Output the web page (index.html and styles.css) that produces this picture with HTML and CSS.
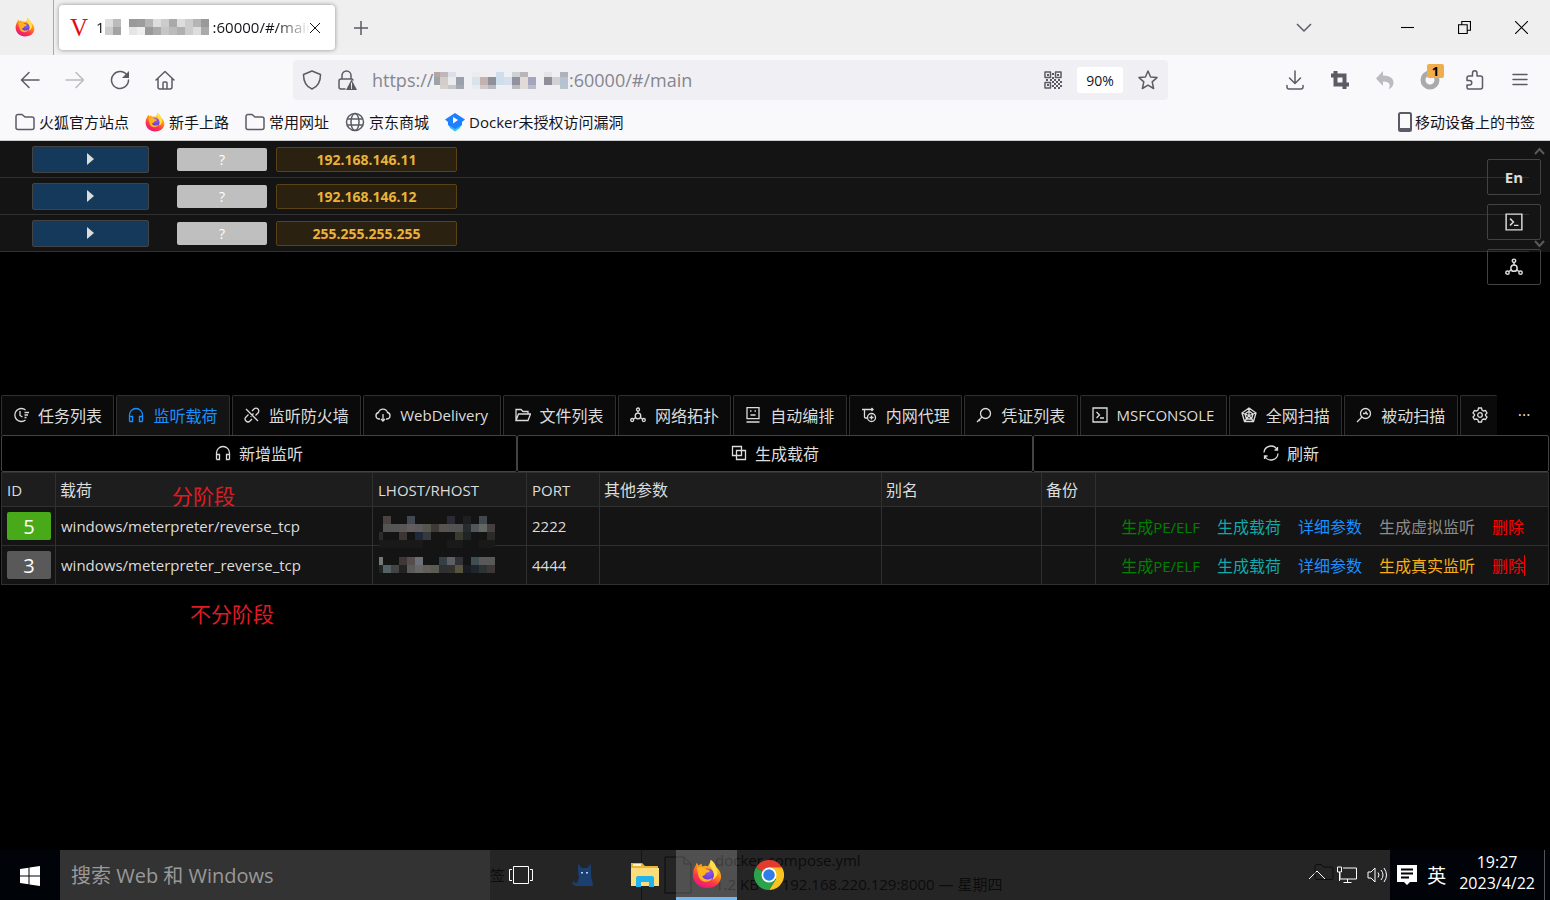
FILE: index.html
```html
<!DOCTYPE html>
<html lang="zh-CN">

<head>
  <meta charset="UTF-8">
  <meta name="viewport" content="width=device-width, initial-scale=1.0">
  <title>main</title>
  <link rel="stylesheet" href="styles.css">
</head>

<body>
  <!-- Shared icons -->
  <svg class="defs" width="0" height="0" aria-hidden="true">
    <defs>
      <linearGradient id="fox" x1="0.8" y1="0" x2="0.3" y2="1">
        <stop offset="0" stop-color="#fff44f" />
        <stop offset="0.4" stop-color="#ff980e" />
        <stop offset="0.7" stop-color="#ff3647" />
        <stop offset="1" stop-color="#e31587" />
      </linearGradient>
      <radialGradient id="globe" cx="0.6" cy="0.3" r="0.8">
        <stop offset="0" stop-color="#9059ff" />
        <stop offset="1" stop-color="#5b2bb5" />
      </radialGradient>
    </defs>
    <symbol id="i-firefox" viewBox="0 0 32 32">
      <path fill="url(#fox)" d="M20 1c4 3 5 6 6 8 4 3 5 7 5 10 0 7-7 12-15 12S1 25 1 17c0-4 1-7 3-10l1-3c1 1 1 2 2 3l3-2 1 3c2-1 4-1 6 0 1-3 3-4 3-7z" />
      <circle cx="16.500" cy="17" r="7" fill="url(#globe)" />
      <path fill="#ffb41f" d="M5 9c3-1 7-1 10 2 2 0 4 1 4 2-1 1-3 1-4 2s-1 3-4 3c1 4 7 5 11 2-2 6-13 6-15-2-1-3-1-6-2-9z" />
      <path fill="#ffe14a" d="M20 1c-1 4-1 6 1 9s4 7 1 12c6-3 6-9 4-13-1-2-2-5-6-8z" />
    </symbol>
    <symbol id="i-folder" viewBox="0 0 20 20">
      <path d="M1 4.500a2 2 0 0 1 2-2h4l3 2.500h7a2 2 0 0 1 2 2v8.500a2 2 0 0 1-2 2H3a2 2 0 0 1-2-2z" />
    </symbol>
    <symbol id="i-headset" viewBox="0 0 16 16">
      <path d="M1.500 14.500V8a6.500 6.500 0 0 1 13 0v6.500M1.500 9.500h3v5h-3M14.500 9.500h-3v5h3" />
    </symbol>
    <symbol id="i-topology" viewBox="0 0 16 16">
      <circle cx="8" cy="2.500" r="1.500" /><circle cx="8" cy="9" r="2.800" /><circle cx="2.200" cy="13" r="1.500" /><circle cx="13.800" cy="13" r="1.500" />
      <path d="M8 4v2.200M5.600 10.500l-2 1.500M10.400 10.500l2 1.500" />
    </symbol>
    <symbol id="i-code" viewBox="0 0 16 16">
      <path d="M1 1h14v14H1zM4.500 5l3 3-3 3M8 11h4" />
    </symbol>
  </svg>

  <header class="browser">
    <div class="tabbar">
      <div class="pinned"><svg class="fx"><use href="#i-firefox" /></svg></div>
      <div class="page-tab">
        <span class="favicon">V</span>
        <span class="page-title">1<svg class="mosaic tab-mosaic" viewBox="0 0 108 16" data-cells="ddd,bbb,-,999,9c9c9c,b5b5b5,ddd,ccc,aaa,ddd,ccc,b5b5b5,9a9a9a;ccc,a3a3a3,-,e5e5e5,eee,999,aaa,c5c5c5,bbb,b0b0b0,ccc,ddd,aaa"></svg>:60000/#/main</span>
        <button class="plain" aria-label="关闭标签页"><svg class="x" viewBox="0 0 10 10"><path d="M0 0l10 10M10 0L0 10" /></svg></button>
      </div>
      <button class="plain new-tab" aria-label="新标签页"><svg viewBox="0 0 16 16"><path d="M8 1v14M1 8h14" /></svg></button>
      <div class="window-controls">
        <button class="plain list-tabs" aria-label="列出标签页"><svg viewBox="0 0 16 16"><path d="M1 4l7 7 7-7" /></svg></button>
        <button class="plain" aria-label="最小化"><svg viewBox="0 0 12 12"><path d="M0 6h12" /></svg></button>
        <button class="plain" aria-label="还原"><svg viewBox="0 0 12 12"><path d="M.500 3.500h8v8h-8zM3.500 3V.500h8v8H9" /></svg></button>
        <button class="plain" aria-label="关闭"><svg viewBox="0 0 12 12"><path d="M0 0l12 12M12 0L0 12" /></svg></button>
      </div>
    </div>

    <div class="navbar">
      <button class="plain" aria-label="后退"><svg viewBox="0 0 20 20"><path d="M19 10H2M9 2.500L1.500 10 9 17.500" /></svg></button>
      <button class="plain dim" aria-label="前进"><svg viewBox="0 0 20 20"><path d="M1 10h17M11 2.500l7.500 7.500-7.500 7.500" /></svg></button>
      <button class="plain" aria-label="刷新页面"><svg viewBox="0 0 20 20"><path d="M17.500 6A8.500 8.500 0 1 0 18.500 10" /><path class="solid" d="M19 1v7h-7z" /></svg></button>
      <button class="plain" aria-label="主页"><svg viewBox="0 0 20 20"><path d="M1 10l9-8.500 9 8.500M3 8.500V17a2 2 0 0 0 2 2h10a2 2 0 0 0 2-2V8.500M8 19v-6a1 1 0 0 1 1-1h2a1 1 0 0 1 1 1v6" /></svg></button>
      <div class="urlbar">
        <svg viewBox="0 0 20 20"><path d="M10 1l8.500 3.500c0 6.500-2 12-8.500 14.500C3.500 16.500 1.500 11 1.500 4.500z" /></svg>
        <svg viewBox="0 0 20 20"><path d="M5 9V5.500a4.500 4.500 0 0 1 9 0V9M8 19H4a2 2 0 0 1-2-2v-6a2 2 0 0 1 2-2h11l1 1" /><path class="solid" d="M14.500 9.500L20 20H9z" /><path class="notch" d="M14.500 13v3.500M14.500 17.500v1" /></svg>
        <div class="url-field">
          <input type="text" aria-label="网址" value="https://                             :60000/#/main">
          <svg class="mosaic url-mosaic" viewBox="2 3 134 17" data-cells="b5a7a0,bfb8b8,dcdfe8,-,-,ececee,efefed,-,cfdeec,-,cdd2d3,b9b4b7,-,-,e8e3e4,-,aeb3bb;9ca3a9,d3ccc8,ebebeb,9aa1ac,-,d9e4ea,c3b3b0,8e909c,cfdeec,d6e0ec,92929e,e2dad6,a5a6bb,-,8f8f9c,d1d0d3,b4c3d1;-,d7d1cc,c3c7cd,a4a7ad,-,e6ecf1,d0c9c8,b8b9c1,-,-,b9bdc0,e2dad6,bbbccb,-,-,-,b8c3cc"></svg>
        </div>
        <svg class="qr" viewBox="0 0 18 18"><path d="M1 1h5.500v5.500H1zM11.500 1H17v5.500h-5.500zM1 11.500h5.500V17H1z" /><path class="solid" d="M3 3h2v2H3zM13 3h2v2h-2zM3 13h2v2H3zM8 2h2v2H8zM8 6h2v2H8zM2 8h2v2H2zM6 8h2v2H6zM10 8h2v2h-2zM14 8h2v2h-2zM8 10h2v2H8zM12 10h2v2h-2zM16 10h2v2h-2zM10 12h2v2h-2zM14 12h2v2h-2zM8 14h2v2H8zM12 14h2v2h-2zM16 14h2v2h-2zM10 16h2v2h-2zM14 16h2v2h-2z" /></svg>
        <button class="plain zoom-level">90%</button>
        <svg viewBox="0 0 20 20"><path d="M10 1l2.600 6 6.400.600-4.800 4.300 1.400 6.600L10 15.200l-5.600 3.300 1.400-6.600L1 7.600 7.400 7z" /></svg>
      </div>
      <button class="plain" aria-label="下载"><svg viewBox="0 0 20 20"><path d="M10 1v12M4.500 8l5.500 5.500L15.500 8M2 15.500v1.500a2 2 0 0 0 2 2h12a2 2 0 0 0 2-2v-1.500" /></svg></button>
      <button class="plain" aria-label="截图"><svg viewBox="0 0 20 20"><path class="thick" d="M5.500 1v13.500H19M1 5.500h13.500V19" /></svg></button>
      <button class="plain dim" aria-label="撤销"><svg viewBox="0 0 20 20"><path class="solid" d="M8 1v4.500c7 0 10.500 3 10.500 7 0 3-2 6-5 6.500 2-2.500 2.500-7.500-5.500-7.500V16L1 8.500z" /></svg></button>
      <button class="plain ext" aria-label="扩展"><svg viewBox="0 0 20 20"><circle cx="10" cy="10" r="7" /></svg><span class="count">1</span></button>
      <button class="plain" aria-label="扩展管理"><svg viewBox="0 0 20 20"><path d="M3 19h12.500a2 2 0 0 0 2-2V8a2 2 0 0 0-2-2H12V3a2 2 0 0 0-4.500 0v3H4a2 2 0 0 0-2 2v2.500h2.500a2 2 0 0 1 0 4.500H2v2a2 2 0 0 0 1 2z" /></svg></button>
      <button class="plain" aria-label="菜单"><svg viewBox="0 0 20 20"><path d="M3 4.500h14M3 9.500h14M3 14.500h14" /></svg></button>
    </div>

    <nav class="bookmarks">
      <a href="#"><svg><use href="#i-folder" /></svg>火狐官方站点</a>
      <a href="#"><svg class="fx"><use href="#i-firefox" /></svg>新手上路</a>
      <a href="#"><svg><use href="#i-folder" /></svg>常用网址</a>
      <a href="#"><svg viewBox="0 0 20 20"><circle cx="10" cy="10" r="8.500" /><ellipse cx="10" cy="10" rx="4" ry="8.500" /><path d="M2 7h16M2 13h16" /></svg>京东商城</a>
      <a href="#"><svg class="fx" viewBox="0 0 20 20"><path fill="#35c2f5" d="M3 12l7 4 7-4-2 4-5 3.500L5 16z" /><path fill="#1e80ff" d="M10 1l10 6.500-3 2.500v3l-7 4-7-4v-3L0 7.500z" /><path fill="#fff" d="M8 5l5 3-5 3.500z" /></svg>Docker未授权访问漏洞</a>
      <a href="#" class="mobile"><svg viewBox="0 0 16 20"><rect x="2" y="1" width="12" height="18" rx="1.500" /><path d="M2 17h12" /></svg>移动设备上的书签</a>
    </nav>
  </header>

  <main>
    <section class="hosts">
      <div class="host-list">
        <div class="host">
          <button class="run" aria-label="展开"><svg viewBox="0 0 7 12"><path d="M0 0l7 6-7 6z" /></svg></button>
          <span class="os">?</span>
          <span class="ip">192.168.146.11</span>
        </div>
        <div class="host">
          <button class="run" aria-label="展开"><svg viewBox="0 0 7 12"><path d="M0 0l7 6-7 6z" /></svg></button>
          <span class="os">?</span>
          <span class="ip">192.168.146.12</span>
        </div>
        <div class="host">
          <button class="run" aria-label="展开"><svg viewBox="0 0 7 12"><path d="M0 0l7 6-7 6z" /></svg></button>
          <span class="os">?</span>
          <span class="ip">255.255.255.255</span>
        </div>
        <div class="scroll">
          <svg viewBox="0 0 11 8"><path d="M1 7l4.500-5L10 7" /></svg>
          <svg viewBox="0 0 11 8"><path d="M1 1l4.500 5L10 1" /></svg>
        </div>
      </div>
      <div class="float-buttons">
        <button>En</button>
        <button aria-label="控制台"><svg><use href="#i-code" /></svg></button>
        <button aria-label="网络拓扑"><svg><use href="#i-topology" /></svg></button>
      </div>
    </section>

    <div class="tabs" role="tablist">
      <button role="tab"><svg viewBox="0 0 16 16"><path d="M12.500 3A6.500 6.500 0 1 0 12.500 13M7 4v4.500l2.500 1.500M11.500 5.500H16M11.500 8H15M11.500 10.500h2" /></svg>任务列表</button>
      <button role="tab" class="active" aria-selected="true"><svg><use href="#i-headset" /></svg>监听载荷</button>
      <button role="tab"><svg viewBox="0 0 16 16"><path d="M8 4l2-2a2.800 2.800 0 0 1 4 4l-2.500 2.500M8 12l-2 2a2.800 2.800 0 0 1-4-4l2.500-2.500M2 2l12 12M6.500 9.500l3-3" /></svg>监听防火墙</button>
      <button role="tab"><svg viewBox="0 0 16 16"><path d="M5 12H4a3.300 3.300 0 0 1-.500-6.500 4.700 4.700 0 0 1 9 0A3.300 3.300 0 0 1 12 12h-1M8 7v7M6 12l2 2 2-2" /></svg><span class="latin">WebDelivery</span></button>
      <button role="tab"><svg viewBox="0 0 16 16"><path d="M1 13.500v-11h5l2 2h5V7M1 13.500L3.500 7H15.500l-2.500 6.500z" /></svg>文件列表</button>
      <button role="tab"><svg><use href="#i-topology" /></svg>网络拓扑</button>
      <button role="tab"><svg viewBox="0 0 16 16"><path d="M2 .700h12v11H2zM1.500 15h13M5 4h1.500M9.500 4H11M5.500 8h5" /></svg>自动编排</button>
      <button role="tab"><svg viewBox="0 0 16 16"><path d="M1 2.500h11M10.500 1l1.500 1.500L10.500 4M3.500 3v7a1 1 0 0 0 1 1H6" /><circle cx="10.500" cy="10.500" r="4" /><path d="M8.500 10.500h4M10.500 8.500v4" /></svg>内网代理</button>
      <button role="tab"><svg viewBox="0 0 16 16"><circle cx="9.500" cy="6.500" r="5" /><path d="M6 10l-5 5M2.500 12.500L4 14" /></svg>凭证列表</button>
      <button role="tab"><svg><use href="#i-code" /></svg><span class="latin">MSFCONSOLE</span></button>
      <button role="tab"><svg viewBox="0 0 16 16"><path d="M8 1l7 5-2.500 8.500h-9L1 6zM8 4l4 3-1.500 5h-5L4 7zM8 1v7M15 6L8 8.500M12.500 14.500L8 8.500l-4.500 6M1 6l7 2.500" /></svg>全网扫描</button>
      <button role="tab"><svg viewBox="0 0 16 16"><circle cx="9.500" cy="6.500" r="5" /><path d="M6 10l-5 5M7 6.500h2l1-1.500 1 2h1" /></svg>被动扫描</button>
      <button role="tab" class="cut" aria-label="设置"><svg viewBox="0 0 16 16"><path d="M6.500 1h3l.500 2 1.500 1 2-.500L15 6l-1.500 1.500v1L15 10l-1.500 2.500-2-.500-1.500 1-.500 2h-3L6 13l-1.500-1-2 .500L1 10l1.500-1.500v-1L1 6l1.500-2.500 2 .500L6 3z" /><circle cx="8" cy="8" r="2.300" /></svg></button>
      <button class="more" aria-label="更多">···</button>
    </div>

    <div class="actions">
      <button><svg><use href="#i-headset" /></svg>新增监听</button>
      <button><svg viewBox="0 0 16 16"><path d="M1.500 1.500h9v9h-9zM5.500 5.500h9v9h-9z" /></svg>生成载荷</button>
      <button><svg viewBox="0 0 16 16"><path d="M1 7.500A7 7 0 0 1 14 4.500M15 8.500A7 7 0 0 1 2 11.500M14.500 2v3h-3M1.500 14v-3h3" /></svg>刷新</button>
    </div>

    <div class="table-wrap">
      <table class="payloads">
        <colgroup>
          <col class="c-id"><col class="c-payload"><col class="c-host"><col class="c-port"><col class="c-other"><col class="c-alias"><col class="c-backup"><col>
        </colgroup>
        <thead>
          <tr>
            <th>ID</th>
            <th class="cjk">载荷</th>
            <th>LHOST/RHOST</th>
            <th>PORT</th>
            <th class="cjk">其他参数</th>
            <th class="cjk">别名</th>
            <th class="cjk">备份</th>
            <th></th>
          </tr>
        </thead>
        <tbody>
          <tr>
            <td><span class="id on">5</span></td>
            <td>windows/meterpreter/reverse_tcp</td>
            <td><svg class="mosaic host-mosaic tall" viewBox="4 0 116 32" data-cells="-,484341,-,-,414a52,-,-,-,-,2c2b33,-,1f1f1f,-,42484b,-;-,545452,555,585755,625d5f,5e5b5f,56564f,3f3a35,545454,535355,525252,262b2e,555457,626964,453f40;2b2b2b,-,-,3b3533,-,20293a,353939,-,-,-,383a2e,1f2424,-,-,2b2a29;191919,191919,191919,191919,191919,191919,141414,141414,141414,1a1a1a,1a1a1a,141414,141414,191919,191919"></svg></td>
            <td>2222</td>
            <td></td>
            <td></td>
            <td></td>
            <td>
              <div class="row-actions">
                <button class="green">生成<span class="latin">PE/ELF</span></button>
                <button class="cyan">生成载荷</button>
                <button class="blue">详细参数</button>
                <button class="gray">生成虚拟监听</button>
                <button class="red">删除</button>
              </div>
            </td>
          </tr>
          <tr>
            <td><span class="id">3</span></td>
            <td>windows/meterpreter_reverse_tcp</td>
            <td><svg class="mosaic host-mosaic" viewBox="4 0 116 16" data-cells="777,-,-,3d3735,544d4b,6b7177,-,-,354046,5d5e66,323236,-,414d54,595959,595959;1f2424,536265,444,222,5a5a58,666764,625f5a,5a5c54,302f31,33322e,55553f,191c22,1f262b,2e3233,3d3835"></svg></td>
            <td>4444</td>
            <td></td>
            <td></td>
            <td></td>
            <td>
              <div class="row-actions">
                <button class="green">生成<span class="latin">PE/ELF</span></button>
                <button class="cyan">生成载荷</button>
                <button class="blue">详细参数</button>
                <button class="orange">生成真实监听</button>
                <button class="red caret">删除</button>
              </div>
            </td>
          </tr>
        </tbody>
      </table>
      <span class="note staged">分阶段</span>
      <span class="note stageless">不分阶段</span>
    </div>
  </main>

  <footer class="taskbar">
    <!-- Desktop items that show through the translucent bar -->
    <div class="behind" aria-hidden="true">
      <span class="label">签</span>
      <svg viewBox="0 0 28 38"><path d="M1 1h19l7 7v29H1zM20 1v7h7" /></svg>
      <div class="file">
        <span class="name">docker-compose.yml</span>
        <span class="meta">1.2 KB — 192.168.220.129:8000 — 星期四</span>
      </div>
    </div>
    <button class="start" aria-label="开始"><svg viewBox="0 0 20 20"><path d="M0 3l8.500-1.300V9.500H0zM9.500 1.500L20 0v9.500H9.500zM0 10.500h8.500v7.800L0 17zM9.500 10.500H20V20L9.500 18.500z" /></svg></button>
    <input class="search" type="text" placeholder="搜索 Web 和 Windows" aria-label="搜索">
    <div class="apps">
      <button aria-label="任务视图"><svg class="view" viewBox="0 0 24 20"><path d="M4.500 1.500h15v17h-15zM3 4.500H.500v11H3M21 4.500h2.500v11H21" /></svg></button>
      <button aria-label="猫"><svg class="cat" viewBox="0 0 22 24"><path fill="#1b3f70" d="M6 1l4 4h5l4-4v11c0 4 2 7 2 11H5c-5 0-6-4-3-5 0 2 1 2 3 2l2-6c-1-2-1-4-1-7z" /><path fill="#b7d2f2" d="M9 9h2v1.500H9zM14 9h2v1.500h-2z" /></svg></button>
      <button aria-label="文件资源管理器"><svg class="explorer" viewBox="0 0 28 24"><path fill="#e8b53a" d="M0 0h11l3 3h13v4H0z" /><path fill="#fff3c4" d="M2 1h8v2H2z" /><path fill="#fddc7b" d="M0 5h28v18H0z" /><path fill="#1fb4ee" d="M5 24V15a2 2 0 0 1 2-2h14a2 2 0 0 1 2 2v9h-5v-5h-8v5z" /></svg></button>
      <button class="current" aria-label="Firefox"><svg class="big"><use href="#i-firefox" /></svg></button>
      <button aria-label="Chrome"><svg class="big" viewBox="0 0 30 30"><path fill="#e33b2e" d="M15 15L2 7.500a15 15 0 0 1 26 0z" /><path fill="#fcc31e" d="M15 15V7.500h13A15 15 0 0 1 15 30l7-11z" /><path fill="#2ba24c" d="M15 15l7 4-7 11A15 15 0 0 1 2 7.500z" /><circle cx="15" cy="15" r="7.500" fill="#fff" /><circle cx="15" cy="15" r="5.800" fill="#2f7de9" /></svg></button>
    </div>
    <div class="tray">
      <svg class="ghost" viewBox="0 0 20 20"><path d="M1 4.500a2 2 0 0 1 2-2h4l3 2.500h7a2 2 0 0 1 2 2v8.500a2 2 0 0 1-2 2H3a2 2 0 0 1-2-2z" /></svg>
      <svg viewBox="0 0 20 20"><path d="M2 14l8-8 8 8" /></svg>
      <svg viewBox="0 0 20 20"><path d="M6 3h13.500v11H3V8M10.500 14v3.500M6.500 17.500h8M.500 2h4v5h-4zM2.500 7v9" /></svg>
      <svg viewBox="0 0 20 20"><path d="M1 7h3l4-4v14l-4-4H1zM11 7.500q2 2.500 0 5M14 5q4 5 0 10M17 3q5 7 0 14" /></svg>
      <div class="tray-dark">
        <svg viewBox="0 0 20 20"><path class="fill" d="M0 0h20v17h-7l-3 3-3-3H0z" /><path class="lines" d="M4 4.500h12M4 8.500h12M4 12.500h8" /></svg>
        <span class="ime">英</span>
        <div class="clock"><span>19:27</span><span>2023/4/22</span></div>
      </div>
    </div>
  </footer>
  <script src="mosaic.js"></script>
</body>

</html>
```
FILE: mosaic.js
```javascript
// Fill every masked address with its 8px colour cells ("-" leaves a gap)
document.querySelectorAll('.mosaic').forEach(svg => {
  svg.dataset.cells.split(';').forEach((row, y) => {
    row.split(',').forEach((color, x) => {
      if (color === '-') return;
      const rect = document.createElementNS('http://www.w3.org/2000/svg', 'rect');
      rect.setAttribute('x', x * 8);
      rect.setAttribute('y', y * 8);
      rect.setAttribute('width', 8);
      rect.setAttribute('height', 8);
      rect.setAttribute('fill', '#' + color);
      svg.appendChild(rect);
    });
  });
});
```
FILE: styles.css
```css
* {
  box-sizing: border-box;
}

body {
  margin: 0;
  min-height: 100vh;
  display: flex;
  flex-direction: column;
  background: #000;
  font-family: "Open Sans", "Noto Sans CJK SC", sans-serif;
  font-size: 15px;
}

button,
input {
  font: inherit;
  color: inherit;
}

button {
  padding: 0;
  margin: 0;
  border: 0;
  background: none;
  white-space: nowrap;
}

svg {
  flex: none;
  fill: none;
  stroke: currentColor;
}

.defs {
  position: absolute;
}

.mosaic,
.fx,
.big,
.cat,
.explorer {
  stroke: none;
}

.mosaic {
  shape-rendering: crispEdges;
}

.solid {
  fill: currentColor;
  stroke: none;
}

/* Browser window */
.browser {
  background: #f9f9fb;
  border-bottom: 1px solid #ccc;
  color: #15141a;
}

.plain {
  display: flex;
  align-items: center;
  justify-content: center;
}

.tabbar {
  display: flex;
  align-items: center;
  height: 55px;
  background: #efefef;
}

.pinned {
  align-self: stretch;
  width: 54px;
  padding: 17px 15px;
  border-right: 1px solid #aaa;
}

.pinned svg {
  display: block;
  width: 20px;
  height: 20px;
}

.page-tab {
  display: flex;
  align-items: center;
  width: 276px;
  height: 45px;
  margin-left: 5px;
  padding: 0 15px 0 11px;
  background: #fff;
  border-radius: 4px;
  box-shadow: 0 0 4px rgba(0, 0, 0, 0.4);
}

.favicon {
  width: 26px;
  font-family: "Liberation Serif", serif;
  font-size: 25px;
  color: #e50914;
}

.page-title {
  display: flex;
  align-items: center;
  flex: 1;
  overflow: hidden;
  padding-bottom: 2px;
  white-space: nowrap;
  -webkit-mask-image: linear-gradient(to right, #000 84%, transparent);
  mask-image: linear-gradient(to right, #000 84%, transparent);
}

.tab-mosaic {
  width: 108px;
  height: 16px;
}

.page-tab .x {
  width: 10px;
  height: 10px;
}

.new-tab {
  width: 52px;
  height: 45px;
  color: #5b5b66;
}

.new-tab svg,
.list-tabs svg {
  width: 16px;
  height: 16px;
  stroke-width: 1.5;
}

.window-controls {
  display: flex;
  margin-left: auto;
}

.window-controls .plain {
  width: 57px;
  height: 55px;
  color: #000;
}

.window-controls .list-tabs {
  margin-right: 47px;
  color: #5b5b66;
}

.window-controls svg {
  width: 13px;
  height: 13px;
}

.window-controls .list-tabs svg {
  width: 16px;
  height: 16px;
}

.navbar {
  display: flex;
  align-items: center;
  height: 50px;
  padding: 0 8px 0 7px;
  color: #5b5b66;
}

.navbar .plain {
  position: relative;
  width: 45px;
  height: 40px;
}

.navbar svg {
  width: 20px;
  height: 20px;
  stroke-width: 1.5;
  stroke-linecap: round;
  stroke-linejoin: round;
}

.navbar .thick {
  stroke-width: 4;
  stroke-linecap: butt;
  stroke-linejoin: miter;
}

.navbar .dim {
  color: #bbbbc0;
}

.ext circle {
  stroke: #aaa;
  stroke-width: 5;
}

.ext .count {
  position: absolute;
  top: 4px;
  right: 8px;
  width: 17px;
  background: #f0ad4e;
  border-radius: 2px;
  color: #000;
  font-size: 13px;
  font-weight: bold;
  line-height: 14px;
}

.urlbar {
  display: flex;
  align-items: center;
  flex: 1;
  height: 40px;
  margin: 0 104px 0 106px;
  padding: 0 10px 0 9px;
  gap: 15px;
  background: #f0f0f4;
  border-radius: 4px;
}

.urlbar .notch {
  stroke: #f0f0f4;
  stroke-width: 1;
}

.url-field {
  position: relative;
  flex: 1;
}

.url-field input {
  width: 100%;
  padding: 0;
  border: 0;
  outline: 0;
  background: none;
  color: #85858e;
  font-size: 18px;
}

.navbar .url-mosaic {
  position: absolute;
  left: 62px;
  top: 4px;
  width: 134px;
  height: 17px;
}

.navbar .qr {
  width: 18px;
  height: 18px;
}

.navbar .zoom-level {
  width: 46px;
  height: 26px;
  background: #fff;
  border-radius: 3px;
  color: #15141a;
  font-size: 14px;
}

.bookmarks {
  display: flex;
  align-items: center;
  gap: 16px;
  height: 35px;
  padding: 0 15px 2px;
}

.bookmarks a {
  display: flex;
  align-items: center;
  gap: 4px;
  color: inherit;
  text-decoration: none;
  white-space: nowrap;
}

.bookmarks svg {
  width: 20px;
  height: 20px;
  color: #5b5b66;
  stroke-width: 1.5;
}

.bookmarks .mobile {
  margin-left: auto;
  gap: 2px;
}

.bookmarks .mobile svg {
  width: 16px;
  stroke-width: 2;
}

/* Host list */
main {
  flex: 1;
  color: #dcdcdc;
}

main svg {
  stroke-width: 1.3;
}

.hosts {
  position: relative;
  min-height: 254px;
}

.host-list {
  position: relative;
  padding-right: 21px;
  background: #141414;
}

.host {
  display: flex;
  align-items: center;
  height: 37px;
  padding-left: 32px;
  border-bottom: 1px solid #303030;
}

.run {
  display: flex;
  align-items: center;
  justify-content: center;
  width: 117px;
  height: 27px;
  margin-right: 28px;
  background: #15395b;
  border: 1px solid #434343;
  border-radius: 2px;
}

.run svg {
  width: 7px;
  height: 12px;
  fill: #dcdcdc;
  stroke: none;
}

.os,
.ip {
  border-radius: 2px;
  font-size: 14px;
  text-align: center;
}

.os {
  width: 90px;
  height: 23px;
  margin-right: 9px;
  background: #bfbfbf;
  color: #fff;
  line-height: 24px;
}

.ip {
  width: 181px;
  height: 25px;
  background: #2b2111;
  border: 1px solid #594214;
  color: #e8b339;
  font-weight: bold;
  line-height: 24px;
}

.scroll {
  position: absolute;
  top: 6px;
  right: 5px;
  bottom: 4px;
  display: flex;
  flex-direction: column;
  justify-content: space-between;
}

.scroll svg {
  width: 11px;
  height: 8px;
  stroke: #5a5a5a;
  stroke-width: 2;
}

.float-buttons {
  position: absolute;
  top: 18px;
  right: 9px;
  display: flex;
  flex-direction: column;
  gap: 9px;
}

.float-buttons button {
  display: flex;
  align-items: center;
  justify-content: center;
  width: 54px;
  height: 36px;
  border: 1px solid #434343;
  border-radius: 2px;
  font-weight: bold;
}

.float-buttons svg {
  width: 18px;
  height: 18px;
}

/* Feature tabs */
.tabs {
  display: flex;
  gap: 2px;
  height: 40px;
  padding: 0 1px;
  font-size: 16px;
}

.tabs button {
  display: flex;
  align-items: center;
  flex: 1 0 auto;
  gap: 9px;
  padding: 0 11px 1px;
  background: #0a0a0a;
  border: 1px solid #303030;
  border-bottom: 0;
  border-radius: 2px 2px 0 0;
}

.tabs svg,
.actions svg {
  width: 16px;
  height: 16px;
}

.tabs .active {
  background: #141414;
  color: #1890ff;
}

.tabs .cut {
  padding-right: 9px;
  border-right: 0;
}

.tabs .more {
  flex: none;
  justify-content: center;
  width: 50px;
  background: none;
  border: 0;
}

.latin {
  font-size: 15px;
}

.actions {
  display: flex;
  padding: 0 1px;
  font-size: 16px;
}

.actions button {
  display: flex;
  align-items: center;
  justify-content: center;
  flex: 1;
  gap: 8px;
  height: 37px;
  padding-bottom: 2px;
  border: 1px solid #434343;
  border-radius: 2px;
}

/* Payload table */
.table-wrap {
  position: relative;
  padding: 0 1px;
}

.payloads {
  width: 100%;
  table-layout: fixed;
  border-collapse: collapse;
  background: #141414;
}

.c-id { width: 54px; }
.c-payload { width: 317px; }
.c-host { width: 154px; }
.c-port { width: 73px; }
.c-other { width: 282px; }
.c-alias { width: 160px; }
.c-backup { width: 54px; }

.payloads th,
.payloads td {
  height: 39px;
  padding: 0 5px;
  border: 1px solid #303030;
  font-weight: normal;
  text-align: left;
  white-space: nowrap;
}

.payloads th {
  height: 34px;
  background: #1d1d1d;
}

.payloads .cjk {
  padding: 0 4px 1px;
  font-size: 16px;
}

.id {
  display: block;
  width: 44px;
  height: 28px;
  background: #595959;
  border-radius: 2px;
  color: #fff;
  font-size: 20px;
  line-height: 29px;
  text-align: center;
}

.id.on {
  background: #49aa19;
}

.host-mosaic {
  display: block;
  width: 116px;
  height: 16px;
  margin-left: 1px;
}

/* The tall mask hangs over the row line below it */
.host-mosaic.tall {
  position: relative;
  top: 6px;
  height: 32px;
}

.row-actions {
  display: flex;
  justify-content: flex-end;
  gap: 17px;
  padding: 0 19px 1px 0;
  font-size: 16px;
}

.green { color: #008000; }
.cyan { color: #13a8a8; }
.blue { color: #1890ff; }
.gray { color: #8c8c8c; }
.orange { color: #faad14; }
.red { color: #f00; }

.caret {
  position: relative;
}

.caret::after {
  content: "";
  position: absolute;
  top: 2px;
  right: -1px;
  width: 1px;
  height: 21px;
  background: #f00;
}

.note {
  position: absolute;
  color: #e01b24;
  font-size: 21px;
  line-height: 24px;
}

.staged {
  left: 172px;
  top: 12px;
}

.stageless {
  left: 190px;
  top: 130px;
}

/* Taskbar */
.taskbar {
  position: relative;
  display: flex;
  height: 50px;
  background: #252525;
  color: #fff;
}

.behind {
  position: absolute;
  left: 490px;
  top: 0;
  bottom: 0;
  display: flex;
  align-items: center;
  color: #0c0c0c;
}

.behind .label {
  align-self: stretch;
  width: 152px;
  border-right: 1px solid #151515;
  line-height: 50px;
}

.behind svg {
  width: 28px;
  height: 38px;
  margin: 0 23px 0 22px;
}

.file {
  display: flex;
  flex-direction: column;
  padding-bottom: 6px;
  line-height: 24px;
}

.start {
  width: 60px;
  background: #000308;
}

.start svg {
  width: 20px;
  height: 20px;
  fill: #fff;
  stroke: none;
  vertical-align: middle;
}

.search {
  width: 430px;
  padding: 0 11px;
  border: 0;
  background: #333;
  font-size: 20px;
}

.search::placeholder {
  color: #999;
  opacity: 1;
}

.apps {
  position: relative;
  display: flex;
  gap: 1px;
}

.apps button {
  display: flex;
  align-items: center;
  justify-content: center;
  width: 61px;
}

.apps .current {
  background: rgba(255, 255, 255, 0.2);
  border-bottom: 3px solid #76b9ed;
}

.view {
  width: 24px;
  height: 20px;
}

.cat {
  width: 22px;
  height: 24px;
}

.explorer {
  width: 28px;
  height: 24px;
}

.big {
  width: 30px;
  height: 30px;
}

.tray {
  position: relative;
  display: flex;
  align-items: center;
  margin-left: auto;
}

.tray svg {
  width: 20px;
  height: 20px;
  margin-left: 10px;
}

.tray .ghost {
  position: absolute;
  left: 17px;
  top: 12px;
  margin: 0;
  color: #0c0c0c;
}

.tray-dark {
  display: flex;
  align-items: center;
  align-self: stretch;
  margin-left: 3px;
  padding: 0 5px 0 7px;
  background: #000308;
}

.tray-dark svg {
  margin: 0;
}

.tray-dark .fill {
  fill: #fff;
  stroke: none;
}

.tray-dark .lines {
  stroke: #000;
  stroke-width: 2;
}

.ime {
  margin: 0 13px 0 10px;
  font-size: 19px;
}

.clock {
  display: flex;
  flex-direction: column;
  justify-content: center;
  align-self: stretch;
  padding: 0 9px 4px 0;
  border-right: 1px solid #555;
  font-size: 16px;
  line-height: 21px;
  text-align: center;
}
```
